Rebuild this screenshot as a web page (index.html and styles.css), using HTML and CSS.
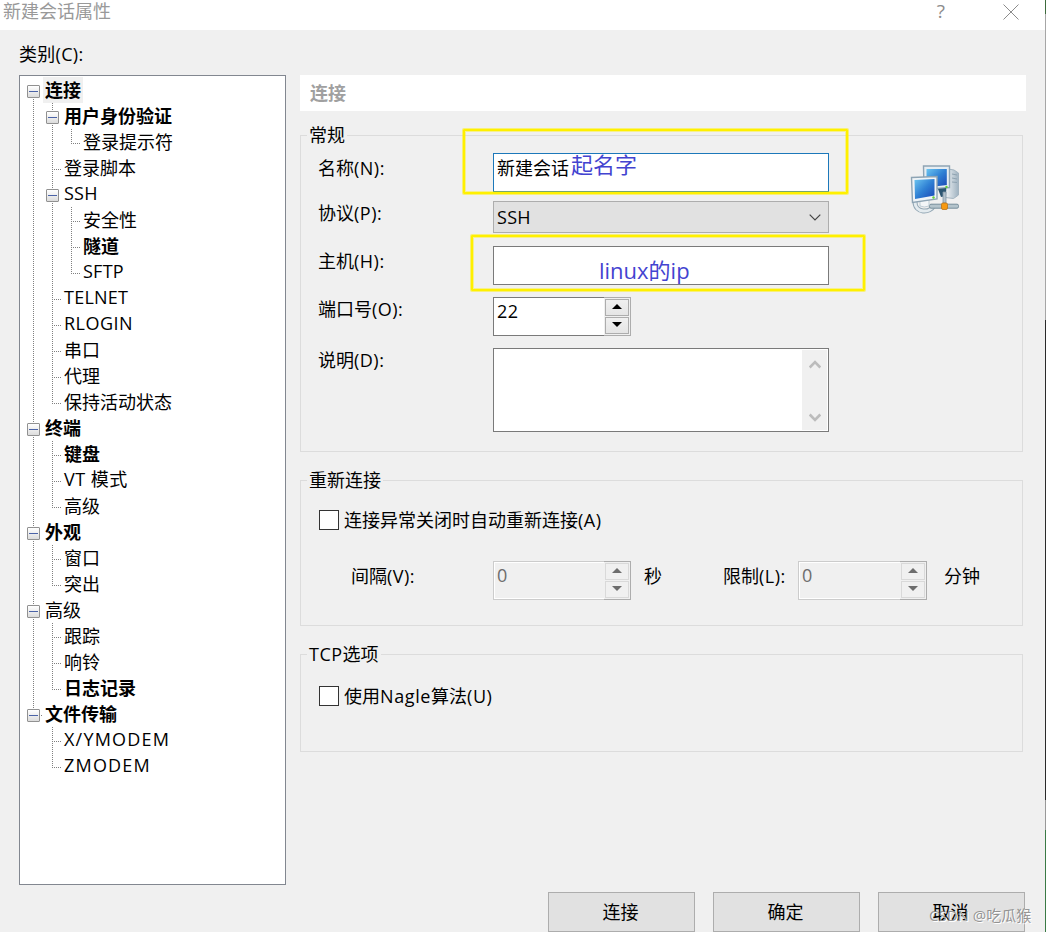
FILE: index.html
```html
<!DOCTYPE html>
<html lang="zh-CN">
<head>
<meta charset="utf-8">
<title>新建会话属性</title>
<link rel="stylesheet" href="styles.css">
</head>
<body>
<div class="window">
  <header class="titlebar">
    <span class="title">新建会话属性</span>
    <span class="help">?</span>
    <svg class="close" width="16" height="16" viewBox="0 0 16 16"><path d="M.5.5l15 15M15.500.5l-15 15" stroke="#8c8c8c" fill="none"/></svg>
  </header>
  <main class="body">
    <section class="side">
      <div class="side-label">类别(C):</div>
      <div class="tree">
        <div class="row"><i class="g first"><b></b></i><span class="bold selected">连接</span></div>
        <div class="row"><i class="g v"></i><i class="g v e"><b></b></i><span class="bold">用户身份验证</span></div>
        <div class="row"><i class="g v"></i><i class="g v"></i><i class="g l"></i><span>登录提示符</span></div>
        <div class="row"><i class="g v"></i><i class="g v t"></i><span>登录脚本</span></div>
        <div class="row"><i class="g v"></i><i class="g v e"><b></b></i><span class="lat">SSH</span></div>
        <div class="row"><i class="g v"></i><i class="g v"></i><i class="g v t"></i><span>安全性</span></div>
        <div class="row"><i class="g v"></i><i class="g v"></i><i class="g v t"></i><span class="bold">隧道</span></div>
        <div class="row"><i class="g v"></i><i class="g v"></i><i class="g l"></i><span class="lat">SFTP</span></div>
        <div class="row"><i class="g v"></i><i class="g v t"></i><span class="lat">TELNET</span></div>
        <div class="row"><i class="g v"></i><i class="g v t"></i><span class="lat mid">RLOGIN</span></div>
        <div class="row"><i class="g v"></i><i class="g v t"></i><span>串口</span></div>
        <div class="row"><i class="g v"></i><i class="g v t"></i><span>代理</span></div>
        <div class="row"><i class="g v"></i><i class="g l"></i><span>保持活动状态</span></div>
        <div class="row"><i class="g v e"><b></b></i><span class="bold">终端</span></div>
        <div class="row"><i class="g v"></i><i class="g v t"></i><span class="bold">键盘</span></div>
        <div class="row"><i class="g v"></i><i class="g v t"></i><span class="lat mid">VT 模式</span></div>
        <div class="row"><i class="g v"></i><i class="g l"></i><span>高级</span></div>
        <div class="row"><i class="g v e"><b></b></i><span class="bold">外观</span></div>
        <div class="row"><i class="g v"></i><i class="g v t"></i><span>窗口</span></div>
        <div class="row"><i class="g v"></i><i class="g l"></i><span>突出</span></div>
        <div class="row"><i class="g v e"><b></b></i><span>高级</span></div>
        <div class="row"><i class="g v"></i><i class="g v t"></i><span>跟踪</span></div>
        <div class="row"><i class="g v"></i><i class="g v t"></i><span>响铃</span></div>
        <div class="row"><i class="g v"></i><i class="g l"></i><span class="bold">日志记录</span></div>
        <div class="row"><i class="g l e"><b></b></i><span class="bold">文件传输</span></div>
        <div class="row"><i class="g"></i><i class="g v t"></i><span class="lat wide">X/YMODEM</span></div>
        <div class="row"><i class="g"></i><i class="g l"></i><span class="lat wide">ZMODEM</span></div>
      </div>
    </section>
    <section class="content">
      <h1 class="heading">连接</h1>

      <div class="group general">
        <div class="legend">常规</div>
        <div class="general-body">
          <div class="fields">
            <div class="field name"><label>名称<em>(N):</em></label><div class="edit focus">新建会话</div></div>
            <div class="field protocol"><label>协议<em>(P):</em></label><div class="select"><span>SSH</span><svg width="12" height="7" viewBox="0 0 12 7"><path d="M.7.7L6 6 11.300.7" fill="none" stroke="#444" stroke-width="1.2"/></svg></div></div>
            <div class="field host"><label>主机<em>(H):</em></label><div class="edit"></div></div>
            <div class="field port"><label>端口号<em>(O):</em></label>
              <div class="spin"><span class="num">22</span><span class="arrows"><i><svg width="10" height="5" viewBox="0 0 10 5"><path d="M0 5L5 0l5 5z"/></svg></i><i><svg width="10" height="5" viewBox="0 0 10 5"><path d="M0 0l5 5 5-5z"/></svg></i></span></div>
            </div>
            <div class="field desc"><label>说明<em>(D):</em></label>
              <div class="memo"><div class="scroll"><svg width="12" height="9" viewBox="0 0 12 9"><path d="M.7 7.500L6 2.200l5.300 5.300" fill="none" stroke="#bcbcbc" stroke-width="2.600"/></svg><svg width="12" height="9" viewBox="0 0 12 9"><path d="M.7 1.500L6 6.800l5.300-5.300" fill="none" stroke="#bcbcbc" stroke-width="2.600"/></svg></div></div>
            </div>
          </div>
          <svg class="pcs" width="50" height="50" viewBox="0 0 50 50">
            <defs>
              <linearGradient id="scr" x1="0" y1="0" x2="1" y2="1"><stop offset="0" stop-color="#6cc5f0"/><stop offset=".5" stop-color="#2f80d4"/><stop offset="1" stop-color="#1a45b4"/></linearGradient>
              <linearGradient id="box" x1="0" y1="0" x2="1" y2="0"><stop offset="0" stop-color="#f2f5f7"/><stop offset="1" stop-color="#9fb2c0"/></linearGradient>
            </defs>
            <path d="M38 4l6 1 4.500 3V30l-5 3.500-8-1z" fill="url(#box)" stroke="#a3b4c0"/>
            <path d="M42 9l5 1M42 13l5 1M42 17l5 .5" stroke="#8fa3b1"/>
            <path d="M13.500 1L39.500 1V22.500L14 24.500z" fill="#e6edf2" stroke="#8ea4b4" stroke-width="1.400"/>
            <path d="M16.500 4H36.800V20L16.500 22.500z" fill="url(#scr)"/>
            <path d="M28 24l8-1v8l-5 1z" fill="#2c5672"/>
            <path d="M33 27h3v11h-3z" fill="#b2c2cc" stroke="#8096a4" stroke-width=".8"/>
            <path d="M5 37c0 11 15 12 19 3" fill="none" stroke="#94a8b5" stroke-width="5"/>
            <path d="M5 37c0 11 15 12 19 3" fill="none" stroke="#e4ebef" stroke-width="3"/>
            <rect x="19.500" y="39.200" width="29" height="4" rx="1.500" fill="#b4c4cc" stroke="#788f9c"/>
            <path d="M10 36l9-1v6q-5 2-9 0z" fill="#f3f6f8" stroke="#a8bac5" stroke-width=".7"/>
            <path d="M1.500 12.500l25.500-1V34L2.500 37.500z" fill="#f0f4f7" stroke="#8ea4b4" stroke-width="1.400"/>
            <path d="M4.500 15l20-1V30.500L5 34z" fill="url(#scr)"/>
            <circle cx="23.500" cy="32.500" r="1.200" fill="#62cf38"/><circle cx="36.500" cy="22" r="1.200" fill="#62cf38"/>
            <rect x="31.500" y="38" width="6" height="6.500" rx="1.500" fill="#f79a12" stroke="#b77318" stroke-width=".8"/>
          </svg>
        </div>
      </div>

      <div class="group reconnect">
        <div class="legend">重新连接</div>
        <div class="check"><i></i><span>连接异常关闭时自动重新连接<em>(A)</em></span></div>
        <div class="timing">
          <label class="l-interval">间隔<em>(V):</em></label>
          <div class="spin off"><span class="num">0</span><span class="arrows"><i><svg width="10" height="5" viewBox="0 0 10 5"><path d="M0 5L5 0l5 5z"/></svg></i><i><svg width="10" height="5" viewBox="0 0 10 5"><path d="M0 0l5 5 5-5z"/></svg></i></span></div>
          <label class="l-sec">秒</label>
          <label class="l-limit">限制<em>(L):</em></label>
          <div class="spin off short"><span class="num">0</span><span class="arrows"><i><svg width="10" height="5" viewBox="0 0 10 5"><path d="M0 5L5 0l5 5z"/></svg></i><i><svg width="10" height="5" viewBox="0 0 10 5"><path d="M0 0l5 5 5-5z"/></svg></i></span></div>
          <label class="l-min">分钟</label>
        </div>
      </div>

      <div class="group tcp">
        <div class="legend"><em>TCP</em>选项</div>
        <div class="check"><i></i><span>使用<em>Nagle</em>算法<em>(U)</em></span></div>
      </div>

      <div class="actions">
        <div class="btn">连接</div>
        <div class="btn">确定</div>
        <div class="btn">取消</div>
      </div>
    </section>
  </main>
  <div class="edge"></div>
  <div class="mark mark-name"></div>
  <div class="mark mark-host"></div>
  <div class="note note-name">起名字</div>
  <div class="note note-host">linux的ip</div>
  <div class="watermark">CSDN @吃瓜猴</div>
</div>
</body>
</html>
```
FILE: styles.css
```css
* { box-sizing: border-box; }
body {
  margin: 0;
  font: 18px/26px "Open Sans", "Noto Sans CJK SC", sans-serif;
  color: #000;
  background: #f0f0f0;
}
em { font-style: normal; letter-spacing: .5px; }
.window {
  position: relative;
  width: 1046px;
  height: 932px;
  overflow: hidden;
  background: #f0f0f0;
  white-space: nowrap;
}
.titlebar {
  display: flex;
  height: 30px;
  padding: 0 27px 0 3px;
  background: #fff;
  color: #999;
}
.title { flex: 1; line-height: 23px; }
.help { margin-right: 58px; line-height: 23px; font-size: 19px; color: #8c8c8c; }
.close { margin-top: 4px; }
.body { display: flex; gap: 14px; padding-left: 19px; }
.side { width: 267px; }
.side-label { height: 45px; padding-top: 11px; letter-spacing: .3px; }
.tree {
  height: 810px;
  padding: 1px 0 0 7px;
  border: 1px solid #828790;
  background: #fff;
}
.row { display: flex; height: 26px; }
.row span { margin-left: -1px; line-height: 27px; }
.row .lat { line-height: 25px; letter-spacing: .25px; }
.row .mid { letter-spacing: .5px; }
.row .wide { letter-spacing: 1.2px; }
.bold { font-weight: 700; }
.row .selected { height: 26px; margin-left: -3px; padding: 0 2px; background: #f0f0f0; }
.g {
  display: block;
  flex: none;
  width: 19px;
  height: 26px;
  background-repeat: no-repeat;
}
.g.v { background-image: repeating-linear-gradient(#808080 0 1px, transparent 1px 2px); background-size: 1px 26px; background-position: 6px 0; }
.g.t, .g.l {
  background-image: repeating-linear-gradient(#808080 0 1px, transparent 1px 2px), repeating-linear-gradient(90deg, #808080 0 1px, transparent 1px 2px);
  background-position: 6px 0, 6px 14px;
}
.g.t { background-size: 1px 26px, 10px 1px; }
.g.l { background-size: 1px 15px, 10px 1px; }
.g.first { background-image: repeating-linear-gradient(#808080 0 1px, transparent 1px 2px); background-size: 1px 6px; background-position: 6px 20px; }
.g.e, .g.first { padding-top: 8px; }
.g b {
  display: flex;
  width: 13px;
  height: 13px;
  border: 1px solid #919191;
  border-radius: 1px;
  background: linear-gradient(#fff, #dcdcdc);
  align-items: center;
  justify-content: center;
}
.g b::before { content: ""; width: 9px; height: 1px; background: #4b63a7; }

.content { width: 726px; padding-top: 45px; }
.heading {
  height: 36px;
  margin: 0 0 24px;
  padding-left: 10px;
  font-size: 18px;
  line-height: 36px;
  color: #a0a0a0;
  background: #fff;
}
.group { display: flex; flex-direction: column; width: 723px; border: 1px solid #dcdcdc; }
.legend {
  align-self: flex-start;
  height: 26px;
  margin: -14px 0 0 6px;
  padding: 0 2px;
  line-height: 27px;
  background: #f0f0f0;
}
.general { height: 317px; }
.general-body { display: flex; }
.fields { display: flex; flex-direction: column; width: 528px; padding: 5px 0 0 17px; }
.field { display: flex; }
.field label { width: 175px; line-height: 24px; }
.name label, .host label { padding-top: 3px; }
.edit {
  width: 336px;
  height: 39px;
  padding: 2px 3px 0;
  border: 1px solid #7a7a7a;
  background: #fff;
}
.name .edit { padding-top: 1px; }
.focus { border-color: #1c78ba; }
.protocol { margin: 9px 0 13px; }
.select {
  display: flex;
  align-items: center;
  justify-content: space-between;
  width: 336px;
  height: 32px;
  padding: 0 7px 0 3px;
  border: 1px solid #adadad;
  background: #e1e1e1;
  letter-spacing: .3px;
}
.select span { line-height: 30px; padding-bottom: 1px; }
.port { margin: 12px 0; }
.spin { display: flex; width: 138px; height: 39px; }
.spin.short { width: 129px; }
.num {
  flex: 1;
  padding: 0 3px;
  letter-spacing: .5px;
  border: 1px solid #7a7a7a;
  border-right: 0;
  background: #fff;
}
.arrows {
  display: flex;
  flex-direction: column;
  gap: 1px;
  width: 27px;
  padding: 1px;
  border: 1px solid #adadad;
  border-left: 0;
}
.arrows i {
  display: flex;
  justify-content: center;
  width: 24px;
  height: 17px;
  padding: 4px 1px 0 0;
  border: 1px solid #adadad;
  background: linear-gradient(#f0f0f0, #e5e5e5);
}
.off .num { color: #6d6d6d; border-color: #ccc; background: #f0f0f0; box-shadow: inset 1px 1px #fff, inset 0 -1px #fff; }
.off .arrows i { border-color: #d9d9d9; background: #f0f0f0; }
.off path { fill: #6d6d6d; }
.memo {
  display: flex;
  justify-content: flex-end;
  width: 336px;
  height: 84px;
  padding: 1px;
  border: 1px solid #7a7a7a;
  background: #fff;
}
.scroll {
  display: flex;
  flex-direction: column;
  align-items: center;
  justify-content: space-between;
  width: 25px;
  padding: 10px 0 8px;
  background: #f0f0f0;
}
.pcs { margin: 17px 0 0 81px; }
.reconnect { height: 146px; margin-top: 28px; }
.check { display: flex; gap: 5px; padding: 17px 0 0 18px; }
.check i { width: 20px; height: 20px; border: 1px solid #333; background: #fff; }
.check span { height: 20px; line-height: 21px; }
.timing { display: flex; padding: 31px 0 0 50px; }
.timing label { padding-top: 2px; }
.l-interval { width: 142px; }
.l-sec { width: 92px; padding-left: 13px; }
.l-limit { width: 75px; }
.l-min { padding-left: 17px; }
.tcp { height: 98px; margin-top: 28px; }
.tcp .check { padding-top: 19px; }
.tcp .check em { letter-spacing: .6px; }
.actions { display: flex; gap: 18px; justify-content: flex-end; padding: 140px 1px 0 0; }
.btn {
  width: 147px;
  height: 40px;
  padding-right: 2px;
  border: 1px solid #adadad;
  background: #e1e1e1;
  line-height: 39px;
  text-align: center;
}

.edge {
  position: absolute;
  top: 0;
  right: 0;
  width: 1px;
  height: 932px;
  background: linear-gradient(#3d6b3d 0 14px, #a6a6a6 14px 320px, #2a2a2a 320px 800px, #999 800px 830px, #3a7a45 830px);
}
.mark {
  position: absolute;
  border: 2px solid #fff000;
  border-radius: 1px;
  box-shadow: 0 0 0 1px rgba(255, 240, 0, .5), inset 0 0 0 1px rgba(255, 240, 0, .4);
}
.mark-name { left: 463px; top: 129px; width: 385px; height: 65px; }
.mark-host { left: 471px; top: 235px; width: 394px; height: 56px; }
.note { position: absolute; font-size: 22px; line-height: 30px; color: #4343d0; }
.note-name { left: 571px; top: 149px; }
.note-host { left: 599px; top: 255px; }
.watermark {
  position: absolute;
  left: 929px;
  top: 903px;
  font-size: 15px;
  line-height: 24px;
  color: rgba(125, 125, 125, .8);
  text-shadow: 1px 1px #fff;
}
```
